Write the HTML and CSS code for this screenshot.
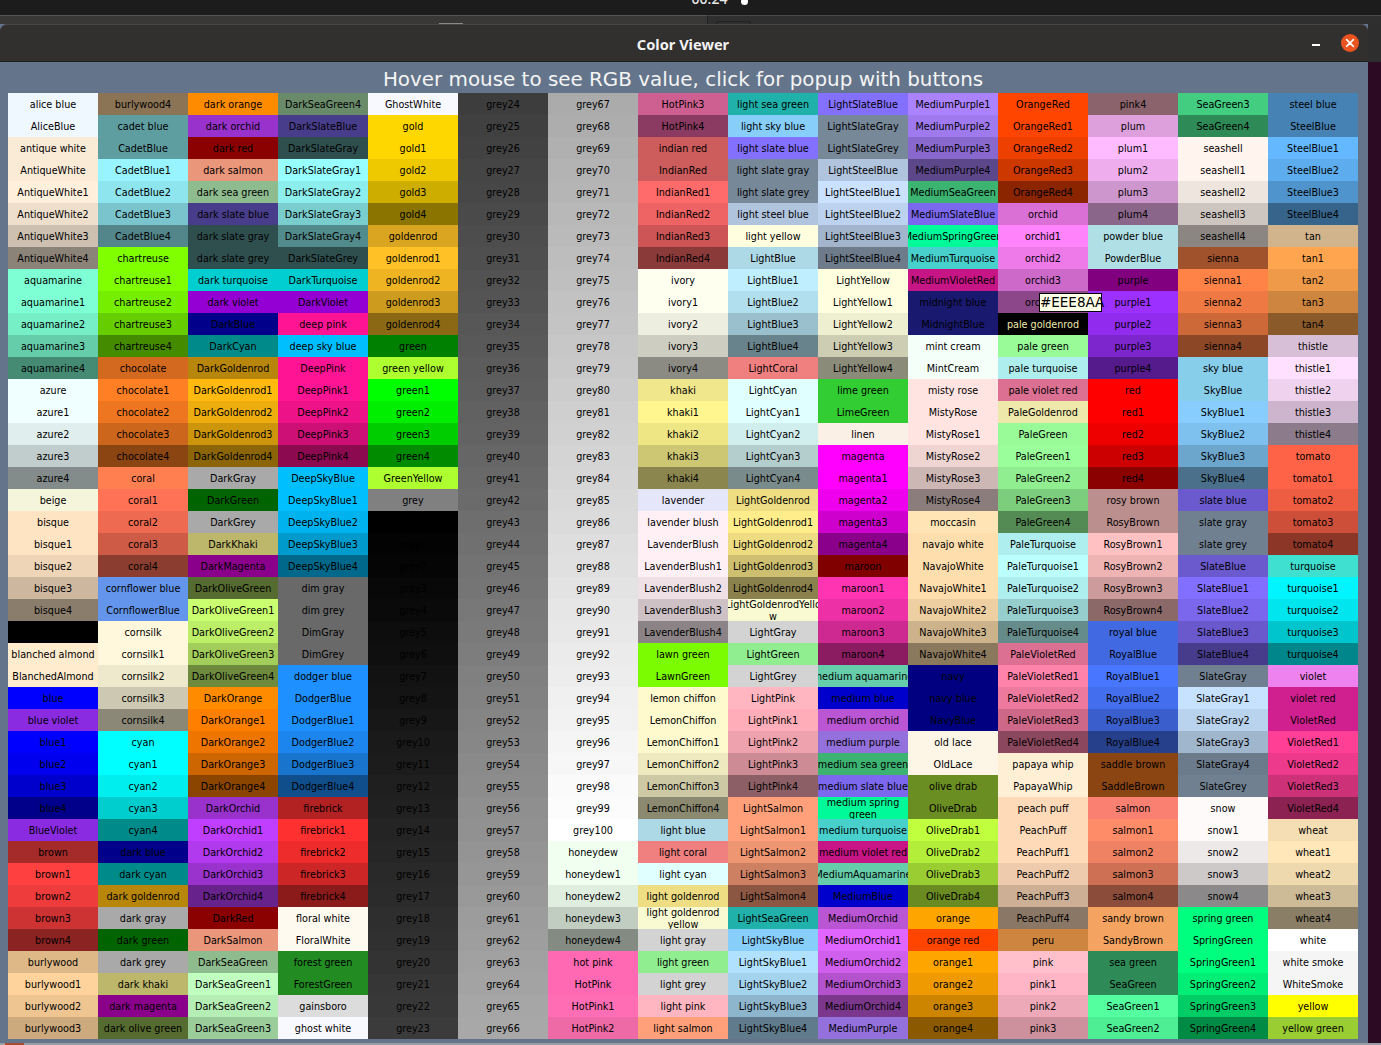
FILE: index.html
```html
<!DOCTYPE html>
<html lang="en">
<head>
<meta charset="utf-8">
<title>Color Viewer</title>
<link rel="stylesheet" href="styles.css">
</head>
<body>
<div class="desktop">
  <header class="topbar">
    <span class="clock">00:24</span>
    <span class="clock-dot"></span>
  </header>
  <div class="back-window">
    <div class="back-left"><span class="back-tab"></span></div>
    <div class="back-right"><span class="back-box"></span></div>
  </div>
  <div class="stage">
    <main class="window">
      <div class="titlebar">
        <span></span>
        <span class="title">Color Viewer</span>
        <div class="controls">
          <span class="minimize"></span>
          <span class="close">
            <svg width="18" height="18" viewBox="0 0 18 18"><path d="M5.6 5.6l6.8 6.8M12.4 5.6l-6.8 6.8" stroke="#fff" stroke-width="1.6" stroke-linecap="round" fill="none"/></svg>
          </span>
        </div>
      </div>
      <div class="content">
        <div class="heading">Hover mouse to see RGB value, click for popup with buttons</div>
        <div class="grid-wrap">
          <div class="grid" id="grid"></div>
          <div class="tooltip">#EEE8AA</div>
        </div>
      </div>
    </main>
    <aside class="wallpaper"><div class="wallpaper-top"></div></aside>
  </div>
  <footer class="bottom-strip"><span class="bottom-mark"></span></footer>
</div>
<script src="app.js"></script>
</body>
</html>
```

FILE: styles.css
```css
* { box-sizing: border-box; }
html, body { margin: 0; padding: 0; }
body { width: 1381px; height: 1045px; overflow: hidden; background: #2c0a24; font-family: "DejaVu Sans", sans-serif; }
.desktop { display: flex; flex-direction: column; height: 1045px; }

.topbar { height: 15px; flex: none; background: #1c1c1c; overflow: hidden; display: flex; justify-content: center; align-items: flex-end; padding: 0 0 9px 59px; gap: 14px; }
.clock { font: 500 14px/14px "Noto Sans", sans-serif; color: #e8e8e8; }
.clock-dot { width: 7px; height: 7px; border-radius: 50%; background: #fff; margin-bottom: 1px; }

.back-window { height: 9px; flex: none; display: flex; background: #2d2c2c; }
.back-left { width: 708px; flex: none; background: #393837; border-top: 1px solid #565552; border-right: 1px solid #222; padding-left: 19px; display: flex; justify-content: flex-start; align-items: flex-end; }
.back-tab { width: 24px; height: 1px; margin-left: 420px; background: #8a8986; }
.back-right { flex: 1; background: #302f2f; border-top: 1px solid #4a4948; display: flex; align-items: flex-end; padding-left: 8px; }
.back-box { width: 35px; height: 3px; border: 1px solid #222; border-bottom: 0; border-radius: 3px 3px 0 0; }

.stage { flex: 1; display: flex; min-height: 0; }
.window { width: 1368px; flex: none; display: flex; flex-direction: column; background: #64758b; }
.titlebar { height: 38px; flex: none; display: grid; grid-template-columns: 1fr auto 1fr; align-items: center; padding: 0 9px; background: #32302f; border-top: 1px solid #474645; border-bottom: 1px solid #1e1e1e; border-radius: 7px 7px 0 0; }
.title { font: 700 14.6px/18px "Noto Sans", sans-serif; color: #f2f2f2; margin: 1px 2px 0 0; }
.controls { display: flex; justify-content: flex-end; align-items: center; gap: 21px; }
.minimize { width: 8px; height: 2px; background: #fff; margin-top: 3px; }
.close { width: 18px; height: 18px; border-radius: 50%; background: #e95420; display: block; }
.close svg { display: block; }

.content { flex: 1; padding: 0 10px 0 8px; min-height: 0; }
.heading { height: 31px; text-align: center; font-size: 19.9px; line-height: 36px; color: #f4f4f4; white-space: nowrap; overflow: visible; }
.grid-wrap { position: relative; width: 1350px; }
.grid { display: grid; grid-auto-flow: column; grid-template-rows: repeat(43, 22px); grid-template-columns: repeat(15, 90px); }
.cell { display: flex; align-items: center; justify-content: center; overflow: hidden; padding-top: 1px; color: #000; font-size: 9.65px; line-height: 12px; }
.cell-label { flex: none; width: 103px; text-align: center; overflow-wrap: anywhere; }
.cell-hover { background: #000; color: #eee8aa; }
.tooltip { position: absolute; left: 1031px; top: 200px; width: 63px; height: 19px; background: #ffffe8; border: 1px solid #000; color: #000; font-size: 13.5px; line-height: 17px; text-align: center; white-space: nowrap; }

.wallpaper { flex: 1; display: flex; flex-direction: column; background: #2c0a24; }
.wallpaper-top { height: 38px; background: #2f2e2e; }
.bottom-strip { height: 2px; flex: none; background: #9a9ea4; display: flex; padding-left: 5px; }
.bottom-mark { width: 19px; background: #a84a30; }
```

FILE: app.js
```js
var data = [];
function add(list) {
  list.split(",").forEach(function (entry) {
    var parts = entry.split(":");
    data.push([parts[0], parts[1]]);
  });
}
function greys(from, to) {
  for (var n = from; n <= to; n++) {
    var v = Math.round(n * 255 / 100).toString(16).toUpperCase();
    if (v.length < 2) v = "0" + v;
    data.push(["grey" + n, v + v + v]);
  }
}

add("alice blue:F0F8FF,AliceBlue:F0F8FF,antique white:FAEBD7,AntiqueWhite:FAEBD7,AntiqueWhite1:FFEFDB,AntiqueWhite2:EEDFCC,AntiqueWhite3:CDC0B0,AntiqueWhite4:8B8378,aquamarine:7FFFD4,aquamarine1:7FFFD4,aquamarine2:76EEC6,aquamarine3:66CDAA,aquamarine4:458B74,azure:F0FFFF,azure1:F0FFFF,azure2:E0EEEE,azure3:C1CDCD,azure4:838B8B,beige:F5F5DC,bisque:FFE4C4,bisque1:FFE4C4,bisque2:EED5B7,bisque3:CDB79E,bisque4:8B7D6B,black:000000,blanched almond:FFEBCD,BlanchedAlmond:FFEBCD,blue:0000FF,blue violet:8A2BE2,blue1:0000FF,blue2:0000EE,blue3:0000CD,blue4:00008B,BlueViolet:8A2BE2,brown:A52A2A,brown1:FF4040,brown2:EE3B3B,brown3:CD3333,brown4:8B2323,burlywood:DEB887,burlywood1:FFD39B,burlywood2:EEC591,burlywood3:CDAA7D");
add("burlywood4:8B7355,cadet blue:5F9EA0,CadetBlue:5F9EA0,CadetBlue1:98F5FF,CadetBlue2:8EE5EE,CadetBlue3:7AC5CD,CadetBlue4:53868B,chartreuse:7FFF00,chartreuse1:7FFF00,chartreuse2:76EE00,chartreuse3:66CD00,chartreuse4:458B00,chocolate:D2691E,chocolate1:FF7F24,chocolate2:EE7621,chocolate3:CD661D,chocolate4:8B4513,coral:FF7F50,coral1:FF7256,coral2:EE6A50,coral3:CD5B45,coral4:8B3E2F,cornflower blue:6495ED,CornflowerBlue:6495ED,cornsilk:FFF8DC,cornsilk1:FFF8DC,cornsilk2:EEE8CD,cornsilk3:CDC8B1,cornsilk4:8B8878,cyan:00FFFF,cyan1:00FFFF,cyan2:00EEEE,cyan3:00CDCD,cyan4:008B8B,dark blue:00008B,dark cyan:008B8B,dark goldenrod:B8860B,dark gray:A9A9A9,dark green:006400,dark grey:A9A9A9,dark khaki:BDB76B,dark magenta:8B008B,dark olive green:556B2F");
add("dark orange:FF8C00,dark orchid:9932CC,dark red:8B0000,dark salmon:E9967A,dark sea green:8FBC8F,dark slate blue:483D8B,dark slate gray:2F4F4F,dark slate grey:2F4F4F,dark turquoise:00CED1,dark violet:9400D3,DarkBlue:00008B,DarkCyan:008B8B,DarkGoldenrod:B8860B,DarkGoldenrod1:FFB90F,DarkGoldenrod2:EEAD0E,DarkGoldenrod3:CD950C,DarkGoldenrod4:8B6508,DarkGray:A9A9A9,DarkGreen:006400,DarkGrey:A9A9A9,DarkKhaki:BDB76B,DarkMagenta:8B008B,DarkOliveGreen:556B2F,DarkOliveGreen1:CAFF70,DarkOliveGreen2:BCEE68,DarkOliveGreen3:A2CD5A,DarkOliveGreen4:6E8B3D,DarkOrange:FF8C00,DarkOrange1:FF7F00,DarkOrange2:EE7600,DarkOrange3:CD6600,DarkOrange4:8B4500,DarkOrchid:9932CC,DarkOrchid1:BF3EFF,DarkOrchid2:B23AEE,DarkOrchid3:9A32CD,DarkOrchid4:68228B,DarkRed:8B0000,DarkSalmon:E9967A,DarkSeaGreen:8FBC8F,DarkSeaGreen1:C1FFC1,DarkSeaGreen2:B4EEB4,DarkSeaGreen3:9BCD9B");
add("DarkSeaGreen4:698B69,DarkSlateBlue:483D8B,DarkSlateGray:2F4F4F,DarkSlateGray1:97FFFF,DarkSlateGray2:8DEEEE,DarkSlateGray3:79CDCD,DarkSlateGray4:528B8B,DarkSlateGrey:2F4F4F,DarkTurquoise:00CED1,DarkViolet:9400D3,deep pink:FF1493,deep sky blue:00BFFF,DeepPink:FF1493,DeepPink1:FF1493,DeepPink2:EE1289,DeepPink3:CD1076,DeepPink4:8B0A50,DeepSkyBlue:00BFFF,DeepSkyBlue1:00BFFF,DeepSkyBlue2:00B2EE,DeepSkyBlue3:009ACD,DeepSkyBlue4:00688B,dim gray:696969,dim grey:696969,DimGray:696969,DimGrey:696969,dodger blue:1E90FF,DodgerBlue:1E90FF,DodgerBlue1:1E90FF,DodgerBlue2:1C86EE,DodgerBlue3:1874CD,DodgerBlue4:104E8B,firebrick:B22222,firebrick1:FF3030,firebrick2:EE2C2C,firebrick3:CD2626,firebrick4:8B1A1A,floral white:FFFAF0,FloralWhite:FFFAF0,forest green:228B22,ForestGreen:228B22,gainsboro:DCDCDC,ghost white:F8F8FF");
add("GhostWhite:F8F8FF,gold:FFD700,gold1:FFD700,gold2:EEC900,gold3:CDAD00,gold4:8B7500,goldenrod:DAA520,goldenrod1:FFC125,goldenrod2:EEB422,goldenrod3:CD9B1D,goldenrod4:8B6914,green:008000,green yellow:ADFF2F,green1:00FF00,green2:00EE00,green3:00CD00,green4:008B00,GreenYellow:ADFF2F,grey:808080");
greys(0, 100);
add("honeydew:F0FFF0,honeydew1:F0FFF0,honeydew2:E0EEE0,honeydew3:C1CDC1,honeydew4:838B83,hot pink:FF69B4,HotPink:FF69B4,HotPink1:FF6EB4,HotPink2:EE6AA7");
add("HotPink3:CD6090,HotPink4:8B3A62,indian red:CD5C5C,IndianRed:CD5C5C,IndianRed1:FF6A6A,IndianRed2:EE6363,IndianRed3:CD5555,IndianRed4:8B3A3A,ivory:FFFFF0,ivory1:FFFFF0,ivory2:EEEEE0,ivory3:CDCDC1,ivory4:8B8B83,khaki:F0E68C,khaki1:FFF68F,khaki2:EEE685,khaki3:CDC673,khaki4:8B864E,lavender:E6E6FA,lavender blush:FFF0F5,LavenderBlush:FFF0F5,LavenderBlush1:FFF0F5,LavenderBlush2:EEE0E5,LavenderBlush3:CDC1C5,LavenderBlush4:8B8386,lawn green:7CFC00,LawnGreen:7CFC00,lemon chiffon:FFFACD,LemonChiffon:FFFACD,LemonChiffon1:FFFACD,LemonChiffon2:EEE9BF,LemonChiffon3:CDC9A5,LemonChiffon4:8B8970,light blue:ADD8E6,light coral:F08080,light cyan:E0FFFF,light goldenrod:EEDD82,light goldenrod yellow:FAFAD2,light gray:D3D3D3,light green:90EE90,light grey:D3D3D3,light pink:FFB6C1,light salmon:FFA07A");
add("light sea green:20B2AA,light sky blue:87CEFA,light slate blue:8470FF,light slate gray:778899,light slate grey:778899,light steel blue:B0C4DE,light yellow:FFFFE0,LightBlue:ADD8E6,LightBlue1:BFEFFF,LightBlue2:B2DFEE,LightBlue3:9AC0CD,LightBlue4:68838B,LightCoral:F08080,LightCyan:E0FFFF,LightCyan1:E0FFFF,LightCyan2:D1EEEE,LightCyan3:B4CDCD,LightCyan4:7A8B8B,LightGoldenrod:EEDD82,LightGoldenrod1:FFEC8B,LightGoldenrod2:EEDC82,LightGoldenrod3:CDBE70,LightGoldenrod4:8B814C,LightGoldenrodYellow:FAFAD2,LightGray:D3D3D3,LightGreen:90EE90,LightGrey:D3D3D3,LightPink:FFB6C1,LightPink1:FFAEB9,LightPink2:EEA2AD,LightPink3:CD8C95,LightPink4:8B5F65,LightSalmon:FFA07A,LightSalmon1:FFA07A,LightSalmon2:EE9572,LightSalmon3:CD8162,LightSalmon4:8B5742,LightSeaGreen:20B2AA,LightSkyBlue:87CEFA,LightSkyBlue1:B0E2FF,LightSkyBlue2:A4D3EE,LightSkyBlue3:8DB6CD,LightSkyBlue4:607B8B");
add("LightSlateBlue:8470FF,LightSlateGray:778899,LightSlateGrey:778899,LightSteelBlue:B0C4DE,LightSteelBlue1:CAE1FF,LightSteelBlue2:BCD2EE,LightSteelBlue3:A2B5CD,LightSteelBlue4:6E7B8B,LightYellow:FFFFE0,LightYellow1:FFFFE0,LightYellow2:EEEED1,LightYellow3:CDCDB4,LightYellow4:8B8B7A,lime green:32CD32,LimeGreen:32CD32,linen:FAF0E6,magenta:FF00FF,magenta1:FF00FF,magenta2:EE00EE,magenta3:CD00CD,magenta4:8B008B,maroon:800000,maroon1:FF34B3,maroon2:EE30A7,maroon3:CD2990,maroon4:8B1C62,medium aquamarine:66CDAA,medium blue:0000CD,medium orchid:BA55D3,medium purple:9370DB,medium sea green:3CB371,medium slate blue:7B68EE,medium spring green:00FA9A,medium turquoise:48D1CC,medium violet red:C71585,MediumAquamarine:66CDAA,MediumBlue:0000CD,MediumOrchid:BA55D3,MediumOrchid1:E066FF,MediumOrchid2:D15FEE,MediumOrchid3:B452CD,MediumOrchid4:7A378B,MediumPurple:9370DB");
add("MediumPurple1:AB82FF,MediumPurple2:9F79EE,MediumPurple3:8968CD,MediumPurple4:5D478B,MediumSeaGreen:3CB371,MediumSlateBlue:7B68EE,MediumSpringGreen:00FA9A,MediumTurquoise:48D1CC,MediumVioletRed:C71585,midnight blue:191970,MidnightBlue:191970,mint cream:F5FFFA,MintCream:F5FFFA,misty rose:FFE4E1,MistyRose:FFE4E1,MistyRose1:FFE4E1,MistyRose2:EED5D2,MistyRose3:CDB7B5,MistyRose4:8B7D7B,moccasin:FFE4B5,navajo white:FFDEAD,NavajoWhite:FFDEAD,NavajoWhite1:FFDEAD,NavajoWhite2:EECFA1,NavajoWhite3:CDB38B,NavajoWhite4:8B795E,navy:000080,navy blue:000080,NavyBlue:000080,old lace:FDF5E6,OldLace:FDF5E6,olive drab:6B8E23,OliveDrab:6B8E23,OliveDrab1:C0FF3E,OliveDrab2:B3EE3A,OliveDrab3:9ACD32,OliveDrab4:698B22,orange:FFA500,orange red:FF4500,orange1:FFA500,orange2:EE9A00,orange3:CD8500,orange4:8B5A00");
add("OrangeRed:FF4500,OrangeRed1:FF4500,OrangeRed2:EE4000,OrangeRed3:CD3700,OrangeRed4:8B2500,orchid:DA70D6,orchid1:FF83FA,orchid2:EE7AE9,orchid3:CD69C9,orchid4:8B4789,pale goldenrod:EEE8AA,pale green:98FB98,pale turquoise:AFEEEE,pale violet red:DB7093,PaleGoldenrod:EEE8AA,PaleGreen:98FB98,PaleGreen1:9AFF9A,PaleGreen2:90EE90,PaleGreen3:7CCD7C,PaleGreen4:548B54,PaleTurquoise:AFEEEE,PaleTurquoise1:BBFFFF,PaleTurquoise2:AEEEEE,PaleTurquoise3:96CDCD,PaleTurquoise4:668B8B,PaleVioletRed:DB7093,PaleVioletRed1:FF82AB,PaleVioletRed2:EE799F,PaleVioletRed3:CD6889,PaleVioletRed4:8B475D,papaya whip:FFEFD5,PapayaWhip:FFEFD5,peach puff:FFDAB9,PeachPuff:FFDAB9,PeachPuff1:FFDAB9,PeachPuff2:EECBAD,PeachPuff3:CDAF95,PeachPuff4:8B7765,peru:CD853F,pink:FFC0CB,pink1:FFB5C5,pink2:EEA9B8,pink3:CD919E");
add("pink4:8B636C,plum:DDA0DD,plum1:FFBBFF,plum2:EEAEEE,plum3:CD96CD,plum4:8B668B,powder blue:B0E0E6,PowderBlue:B0E0E6,purple:800080,purple1:9B30FF,purple2:912CEE,purple3:7D26CD,purple4:551A8B,red:FF0000,red1:FF0000,red2:EE0000,red3:CD0000,red4:8B0000,rosy brown:BC8F8F,RosyBrown:BC8F8F,RosyBrown1:FFC1C1,RosyBrown2:EEB4B4,RosyBrown3:CD9B9B,RosyBrown4:8B6969,royal blue:4169E1,RoyalBlue:4169E1,RoyalBlue1:4876FF,RoyalBlue2:436EEE,RoyalBlue3:3A5FCD,RoyalBlue4:27408B,saddle brown:8B4513,SaddleBrown:8B4513,salmon:FA8072,salmon1:FF8C69,salmon2:EE8262,salmon3:CD7054,salmon4:8B4C39,sandy brown:F4A460,SandyBrown:F4A460,sea green:2E8B57,SeaGreen:2E8B57,SeaGreen1:54FF9F,SeaGreen2:4EEE94");
add("SeaGreen3:43CD80,SeaGreen4:2E8B57,seashell:FFF5EE,seashell1:FFF5EE,seashell2:EEE5DE,seashell3:CDC5BF,seashell4:8B8682,sienna:A0522D,sienna1:FF8247,sienna2:EE7942,sienna3:CD6839,sienna4:8B4726,sky blue:87CEEB,SkyBlue:87CEEB,SkyBlue1:87CEFF,SkyBlue2:7EC0EE,SkyBlue3:6CA6CD,SkyBlue4:4A708B,slate blue:6A5ACD,slate gray:708090,slate grey:708090,SlateBlue:6A5ACD,SlateBlue1:836FFF,SlateBlue2:7A67EE,SlateBlue3:6959CD,SlateBlue4:473C8B,SlateGray:708090,SlateGray1:C6E2FF,SlateGray2:B9D3EE,SlateGray3:9FB6CD,SlateGray4:6C7B8B,SlateGrey:708090,snow:FFFAFA,snow1:FFFAFA,snow2:EEE9E9,snow3:CDC9C9,snow4:8B8989,spring green:00FF7F,SpringGreen:00FF7F,SpringGreen1:00FF7F,SpringGreen2:00EE76,SpringGreen3:00CD66,SpringGreen4:008B45");
add("steel blue:4682B4,SteelBlue:4682B4,SteelBlue1:63B8FF,SteelBlue2:5CACEE,SteelBlue3:4F94CD,SteelBlue4:36648B,tan:D2B48C,tan1:FFA54F,tan2:EE9A49,tan3:CD853F,tan4:8B5A2B,thistle:D8BFD8,thistle1:FFE1FF,thistle2:EED2EE,thistle3:CDB5CD,thistle4:8B7B8B,tomato:FF6347,tomato1:FF6347,tomato2:EE5C42,tomato3:CD4F39,tomato4:8B3626,turquoise:40E0D0,turquoise1:00F5FF,turquoise2:00E5EE,turquoise3:00C5CD,turquoise4:00868B,violet:EE82EE,violet red:D02090,VioletRed:D02090,VioletRed1:FF3E96,VioletRed2:EE3A8C,VioletRed3:CD3278,VioletRed4:8B2252,wheat:F5DEB3,wheat1:FFE7BA,wheat2:EED8AE,wheat3:CDBA96,wheat4:8B7E66,white:FFFFFF,white smoke:F5F5F5,WhiteSmoke:F5F5F5,yellow:FFFF00,yellow green:9ACD32");

var grid = document.getElementById("grid");
data.forEach(function (item) {
  var cell = document.createElement("div");
  var label = document.createElement("span");
  cell.className = "cell";
  label.className = "cell-label";
  label.textContent = item[0];
  if (item[0] === "pale goldenrod") {
    cell.classList.add("cell-hover");
  } else {
    cell.style.backgroundColor = "#" + item[1];
  }
  cell.appendChild(label);
  grid.appendChild(cell);
});
```
